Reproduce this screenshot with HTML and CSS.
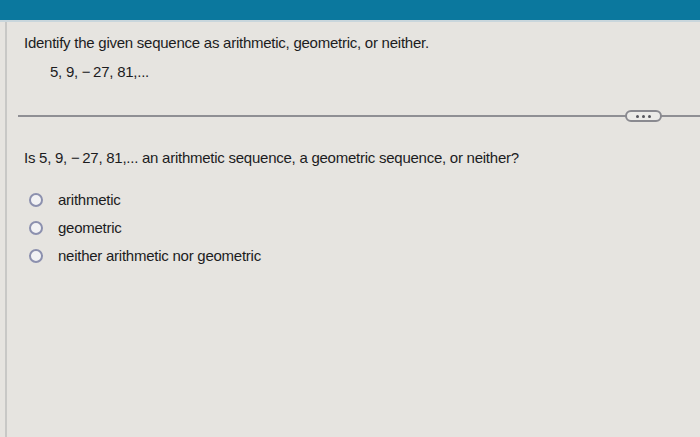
FILE: index.html
```html
<!DOCTYPE html>
<html>
<head>
<meta charset="utf-8">
<link rel="stylesheet" href="styles.css">
</head>
<body>
<div class="topbar"></div>
<div class="strip"></div>
<div class="page">
  <div class="content">
    <p class="prompt">Identify the given sequence as arithmetic, geometric, or neither.</p>
    <p class="seq">5, 9, &#8722;&#8201;27, 81,...</p>
    <div class="rule">
      <span class="more"><i></i><i></i><i></i></span>
    </div>
    <p class="question">Is 5, 9, &#8722;&#8201;27, 81,... an arithmetic sequence, a geometric sequence, or neither?</p>
    <ul class="options">
      <li><span class="radio"></span>arithmetic</li>
      <li><span class="radio"></span>geometric</li>
      <li><span class="radio"></span>neither arithmetic nor geometric</li>
    </ul>
  </div>
</div>
</body>
</html>
```
FILE: styles.css
```css
html, body {
  margin: 0;
  padding: 0;
  height: 100%;
  background: #e6e4e0;
  font-family: "Liberation Sans", Arial, sans-serif;
  color: #1c1c1e;
  overflow: hidden;
}
.topbar {
  height: 20px;
  background: #0b789e;
}
.strip {
  height: 2px;
  background: #c9d6dc;
}
.page {
  margin-left: 5px;
  border-left: 2px solid #c8c8c6;
  height: calc(100% - 22px);
}
.content {
  padding: 12px 0 0 17px;
  letter-spacing: -0.25px;
}
.prompt {
  margin: 0;
  font-size: 15px;
  line-height: 18px;
}
.seq {
  margin: 11px 0 0 26px;
  font-size: 15px;
  line-height: 18px;
}
.rule {
  margin-top: 34px;
  margin-left: -6px;
  height: 2px;
  background: #8f8f94;
  position: relative;
}
.more {
  position: absolute;
  left: 607px;
  top: -5px;
  width: 33px;
  height: 8px;
  border: 2px solid #8a8a90;
  border-radius: 7px;
  background: #ecebe8;
  display: flex;
  justify-content: center;
  align-items: center;
  gap: 3px;
}
.more i {
  width: 3px;
  height: 3px;
  background: #55555c;
  border-radius: 50%;
}
.question {
  margin: 32px 0 0 0;
  font-size: 15px;
  line-height: 18px;
}
.options {
  list-style: none;
  margin: 24px 0 0 0;
  padding: 0;
  display: flex;
  flex-direction: column;
  gap: 10px;
}
.options li {
  display: flex;
  align-items: center;
  font-size: 15px;
  line-height: 18px;
}
.radio {
  width: 10px;
  height: 10px;
  border: 2px solid #8c90ae;
  border-radius: 50%;
  background: #f2f2f4;
  margin-left: 5px;
  margin-right: 15px;
}
```
